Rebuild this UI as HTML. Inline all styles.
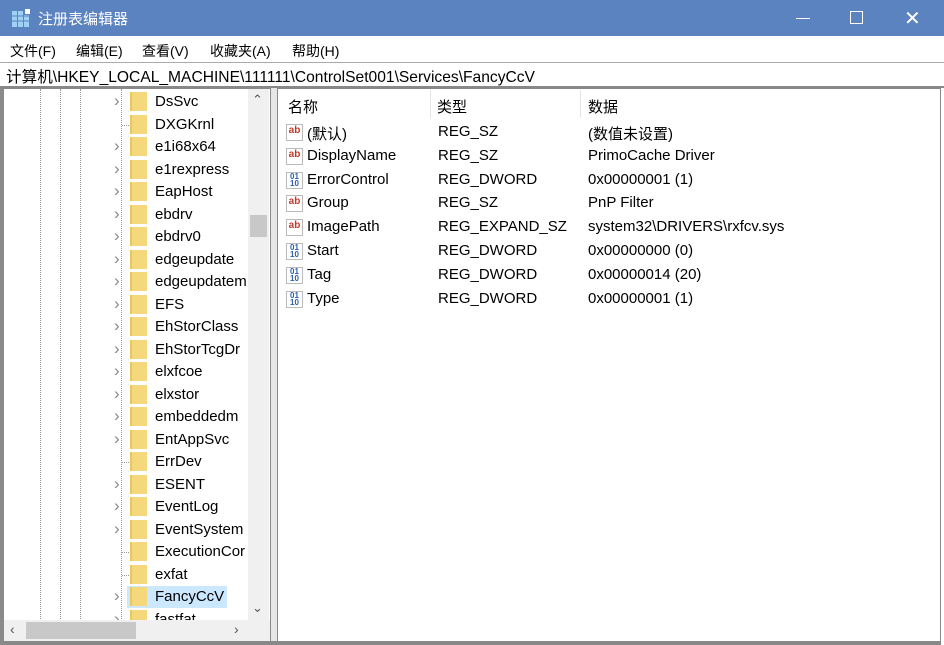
<!DOCTYPE html>
<html><head><meta charset="utf-8"><style>
*{margin:0;padding:0;box-sizing:border-box}
body{width:944px;height:645px;overflow:hidden;background:#fff;font-family:"Liberation Sans","Noto Sans CJK SC",sans-serif;font-size:15px;color:#000;position:relative}
.a{position:absolute;white-space:nowrap}
.title{left:0;top:0;width:944px;height:36px;background:#5b83bf}
.fold{position:absolute;width:17px;height:19px;background:#f5d87c;border-left:2px solid #e8c660}
.chev{position:absolute;color:#888;font-size:17px}
.dl{position:absolute;border-left:1px dotted #999}
.ic{position:absolute;width:17px;height:17px;border:1px solid #bbb;background:#fff;font-size:10px;font-weight:bold;line-height:9px;text-align:center}
</style></head><body>
<div class="a title"></div>
<svg class="a" style="left:12px;top:9px" width="20" height="20"><g fill="#9fd0f5"><rect x="0" y="2" width="5" height="16"/><rect x="6" y="2" width="5" height="16"/><rect x="12" y="6" width="5" height="12"/></g><g stroke="#5b83bf" stroke-width="1"><line x1="0" y1="7" x2="18" y2="7"/><line x1="0" y1="12" x2="18" y2="12"/></g><rect x="13" y="0" width="5" height="5" fill="#fff"/></svg>
<div class="a" style="left:38px;top:8px;color:#fff;font-size:15px">注册表编辑器</div>
<div class="a" style="left:796px;top:18px;width:14px;border-top:1px solid #fff"></div>
<div class="a" style="left:850px;top:11px;width:13px;height:13px;border:1px solid #fff"></div>
<div class="a" style="left:904px;top:6px;color:#fff;font-size:20px">✕</div>
<div class="a" style="left:0;top:36px;width:944px;height:26px;background:#fff"></div>
<div class="a" style="left:10px;top:41px;font-size:14px">文件(F)</div>
<div class="a" style="left:76px;top:41px;font-size:14px">编辑(E)</div>
<div class="a" style="left:142px;top:41px;font-size:14px">查看(V)</div>
<div class="a" style="left:210px;top:41px;font-size:14px">收藏夹(A)</div>
<div class="a" style="left:292px;top:41px;font-size:14px">帮助(H)</div>
<div class="a" style="left:0;top:62px;width:944px;height:1px;background:#aaa"></div>
<div class="a" style="left:6px;top:65px;font-size:15.6px">计算机\HKEY_LOCAL_MACHINE\111111\ControlSet001\Services\FancyCcV</div>
<div class="a" style="left:0;top:86px;width:944px;height:3px;background:#888"></div>
<div class="a" style="left:270px;top:88px;width:8px;height:557px;background:#e6e6e6;border-left:1px solid #888;border-right:1px solid #888"></div>
<div class="a" style="left:0;top:641px;width:944px;height:4px;background:#888"></div>
<div class="a" style="left:0;top:88px;width:4px;height:557px;background:#8a8a8a"></div>
<div class="a" style="left:940px;top:88px;width:4px;height:557px;background:#fff;border-left:1px solid #888"></div>
<!-- tree -->
<div class="dl" style="left:40px;top:89px;height:530px"></div>
<div class="dl" style="left:60px;top:89px;height:530px"></div>
<div class="dl" style="left:80px;top:89px;height:530px"></div>
<div class="dl" style="left:121px;top:89px;height:530px"></div>
<div id="tree"></div>
<div class="a" style="left:248px;top:89px;width:21px;height:531px;background:#f0f0f0"></div>
<div class="a" style="left:252px;top:92px;color:#555;font-size:13px">⌃</div>
<div class="a" style="left:250px;top:215px;width:17px;height:22px;background:#c8c8c8"></div>
<div class="a" style="left:252px;top:600px;color:#555;font-size:13px">⌄</div>
<div class="a" style="left:4px;top:620px;width:266px;height:21px;background:#f0f0f0"></div>
<div class="a" style="left:26px;top:622px;width:110px;height:17px;background:#c8c8c8"></div>
<div class="a" style="left:10px;top:621px;color:#555;font-size:14px">‹</div>
<div class="a" style="left:234px;top:621px;color:#555;font-size:14px">›</div>
<!-- list -->
<div class="a" style="left:430px;top:90px;height:28px;border-left:1px solid #e5e5e5"></div>
<div class="a" style="left:580px;top:90px;height:28px;border-left:1px solid #e5e5e5"></div>
<div class="a" style="left:288px;top:96px">名称</div>
<div class="a" style="left:437px;top:96px">类型</div>
<div class="a" style="left:588px;top:96px">数据</div>
<div id="list"></div>
<script>
var t=[["DsSvc",1],["DXGKrnl",0],["e1i68x64",1],["e1rexpress",1],["EapHost",1],["ebdrv",1],["ebdrv0",1],["edgeupdate",1],["edgeupdatem",1],["EFS",1],["EhStorClass",1],["EhStorTcgDr",1],["elxfcoe",1],["elxstor",1],["embeddedm",1],["EntAppSvc",1],["ErrDev",0],["ESENT",1],["EventLog",1],["EventSystem",1],["ExecutionCor",0],["exfat",0],["FancyCcV",1],["fastfat",1]];
var h="";t.forEach(function(r,i){var y=92+22.5*i;
if(i==22)h+='<div class="a" style="left:127px;top:'+(y-1)+'px;width:100px;height:22px;background:#cce8ff"></div>';
if(r[1])h+='<div class="chev" style="left:114px;top:'+(y-1)+'px">›</div>';else h+='<div class="a" style="left:122px;top:'+(y+10)+'px;width:7px;border-top:1px dotted #999"></div>';
h+='<div class="fold" style="left:130px;top:'+(y)+'px"></div><div class="a" style="left:155px;top:'+(y+1)+'px;'+(i==23?'height:17px;overflow:hidden':'')+'">'+r[0]+'</div>';});
document.getElementById("tree").innerHTML=h;
var l=[["(默认)","REG_SZ","(数值未设置)",0],["DisplayName","REG_SZ","PrimoCache Driver",0],["ErrorControl","REG_DWORD","0x00000001 (1)",1],["Group","REG_SZ","PnP Filter",0],["ImagePath","REG_EXPAND_SZ","system32\\DRIVERS\\rxfcv.sys",0],["Start","REG_DWORD","0x00000000 (0)",1],["Tag","REG_DWORD","0x00000014 (20)",1],["Type","REG_DWORD","0x00000001 (1)",1]];
h="";l.forEach(function(r,i){var y=123+23.8*i;
h+=r[3]?'<div class="ic" style="left:286px;top:'+(y+1)+'px;color:#2a5db0;font-size:8px;line-height:7px">01<br>10</div>':'<div class="ic" style="left:286px;top:'+(y+1)+'px;color:#c0392b;line-height:12px">ab</div>';
h+='<div class="a" style="left:307px;top:'+y+'px">'+r[0]+'</div><div class="a" style="left:438px;top:'+y+'px">'+r[1]+'</div><div class="a" style="left:588px;top:'+y+'px">'+r[2]+'</div>';});
document.getElementById("list").innerHTML=h;
</script>
</body></html>
